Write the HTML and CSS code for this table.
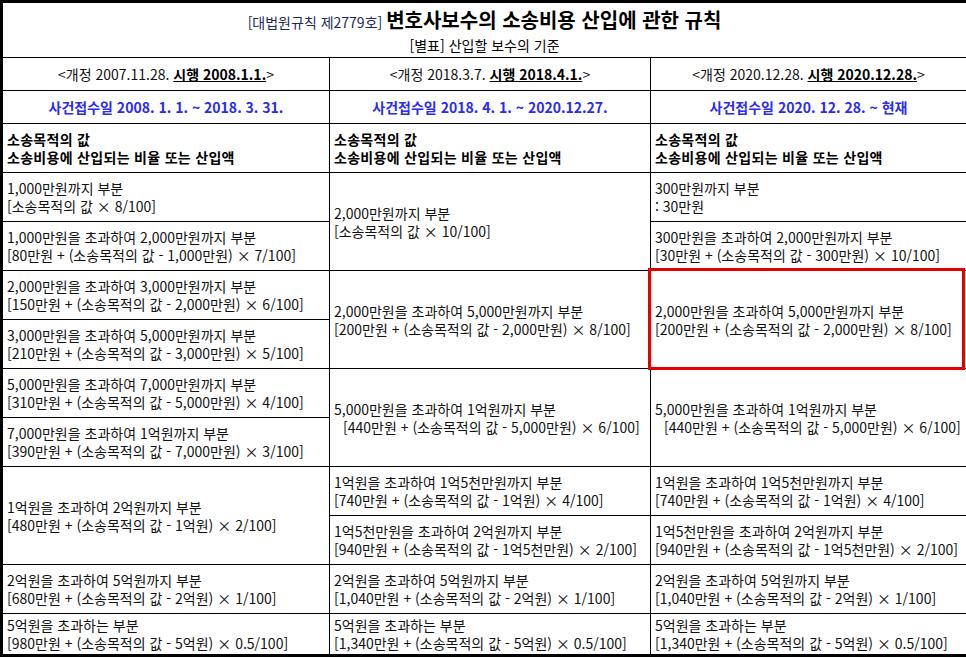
FILE: index.html
```html
<!DOCTYPE html>
<html lang="ko">
<head>
<meta charset="utf-8">
<title>변호사보수의 소송비용 산입에 관한 규칙</title>
<link rel="stylesheet" href="styles.css">
</head>
<body>
<table class="fee-table">
  <colgroup>
    <col class="c1"><col class="c2"><col class="c3">
  </colgroup>
  <tbody>
    <tr class="r-title">
      <td colspan="3" class="title-cell">
        <div class="title-line"><span class="rule-no">[대법원규칙 제2779호]</span> <span class="rule-name">변호사보수의 소송비용 산입에 관한 규칙</span></div>
        <div class="sub-title">[별표] 산입할 보수의 기준</div>
      </td>
    </tr>
    <tr class="r-rev">
      <td class="center">&lt;개정 2007.11.28. <b class="eff">시행 2008.1.1.</b>&gt;</td>
      <td class="center">&lt;개정 2018.3.7. <b class="eff">시행 2018.4.1.</b>&gt;</td>
      <td class="center">&lt;개정 2020.12.28. <b class="eff">시행 2020.12.28.</b>&gt;</td>
    </tr>
    <tr class="r-date">
      <td class="center date">사건접수일 2008. 1. 1. ~ 2018. 3. 31.</td>
      <td class="center date">사건접수일 2018. 4. 1. ~ 2020.12.27.</td>
      <td class="center date">사건접수일 2020. 12. 28. ~ 현재</td>
    </tr>
    <tr class="r-head">
      <td class="head">소송목적의 값<br>소송비용에 산입되는 비율 또는 산입액</td>
      <td class="head">소송목적의 값<br>소송비용에 산입되는 비율 또는 산입액</td>
      <td class="head">소송목적의 값<br>소송비용에 산입되는 비율 또는 산입액</td>
    </tr>
    <tr class="r-sub">
      <td>1,000만원까지 부분<br>[소송목적의 값 × 8/100]</td>
      <td rowspan="2">2,000만원까지 부분<br>[소송목적의 값 × 10/100]</td>
      <td>300만원까지 부분<br>: 30만원</td>
    </tr>
    <tr class="r-sub">
      <td>1,000만원을 초과하여 2,000만원까지 부분<br>[80만원 + (소송목적의 값 - 1,000만원) × 7/100]</td>
      <td>300만원을 초과하여 2,000만원까지 부분<br>[30만원 + (소송목적의 값 - 300만원) × 10/100]</td>
    </tr>
    <tr class="r-sub">
      <td>2,000만원을 초과하여 3,000만원까지 부분<br>[150만원 + (소송목적의 값 - 2,000만원) × 6/100]</td>
      <td rowspan="2">2,000만원을 초과하여 5,000만원까지 부분<br>[200만원 + (소송목적의 값 - 2,000만원) × 8/100]</td>
      <td rowspan="2" class="hl">2,000만원을 초과하여 5,000만원까지 부분<br>[200만원 + (소송목적의 값 - 2,000만원) × 8/100]</td>
    </tr>
    <tr class="r-sub">
      <td>3,000만원을 초과하여 5,000만원까지 부분<br>[210만원 + (소송목적의 값 - 3,000만원) × 5/100]</td>
    </tr>
    <tr class="r-sub">
      <td>5,000만원을 초과하여 7,000만원까지 부분<br>[310만원 + (소송목적의 값 - 5,000만원) × 4/100]</td>
      <td rowspan="2">5,000만원을 초과하여 1억원까지 부분<br><span class="indent">[440만원 + (소송목적의 값 - 5,000만원) × 6/100]</span></td>
      <td rowspan="2">5,000만원을 초과하여 1억원까지 부분<br><span class="indent">[440만원 + (소송목적의 값 - 5,000만원) × 6/100]</span></td>
    </tr>
    <tr class="r-sub">
      <td>7,000만원을 초과하여 1억원까지 부분<br>[390만원 + (소송목적의 값 - 7,000만원) × 3/100]</td>
    </tr>
    <tr class="r-sub">
      <td rowspan="2">1억원을 초과하여 2억원까지 부분<br>[480만원 + (소송목적의 값 - 1억원) × 2/100]</td>
      <td>1억원을 초과하여 1억5천만원까지 부분<br>[740만원 + (소송목적의 값 - 1억원) × 4/100]</td>
      <td>1억원을 초과하여 1억5천만원까지 부분<br>[740만원 + (소송목적의 값 - 1억원) × 4/100]</td>
    </tr>
    <tr class="r-sub">
      <td>1억5천만원을 초과하여 2억원까지 부분<br>[940만원 + (소송목적의 값 - 1억5천만원) × 2/100]</td>
      <td>1억5천만원을 초과하여 2억원까지 부분<br>[940만원 + (소송목적의 값 - 1억5천만원) × 2/100]</td>
    </tr>
    <tr class="r-sub">
      <td>2억원을 초과하여 5억원까지 부분<br>[680만원 + (소송목적의 값 - 2억원) × 1/100]</td>
      <td>2억원을 초과하여 5억원까지 부분<br>[1,040만원 + (소송목적의 값 - 2억원) × 1/100]</td>
      <td>2억원을 초과하여 5억원까지 부분<br>[1,040만원 + (소송목적의 값 - 2억원) × 1/100]</td>
    </tr>
    <tr class="r-last">
      <td>5억원을 초과하는 부분<br>[980만원 + (소송목적의 값 - 5억원) × 0.5/100]</td>
      <td>5억원을 초과하는 부분<br>[1,340만원 + (소송목적의 값 - 5억원) × 0.5/100]</td>
      <td>5억원을 초과하는 부분<br>[1,340만원 + (소송목적의 값 - 5억원) × 0.5/100]</td>
    </tr>
  </tbody>
</table>
</body>
</html>
```
FILE: styles.css
```css
html, body {
  margin: 0;
  padding: 0;
  background: #fff;
}

body {
  font-family: "Noto Sans CJK KR", "Noto Sans", sans-serif;
  font-size: 14px;
  line-height: 18px;
  color: #111;
  overflow: hidden;
}

.fee-table {
  width: 966px;
  table-layout: fixed;
  border-collapse: collapse;
  border: 3px solid #000;
}

.c1 { width: 328px; }
.c2 { width: 321px; }
.c3 { width: 317px; }

.fee-table td {
  border: 1px solid #000;
  padding: 0 4px;
  vertical-align: middle;
  text-align: left;
  white-space: nowrap;
}

.r-title { height: 56px; }
.r-rev { height: 33px; }
.r-date { height: 33px; }
.r-head { height: 49px; }
.r-sub { height: 49px; }
.r-last { height: 42px; }

.fee-table td.title-cell {
  text-align: center;
  padding-top: 1px;
}

.title-line {
  line-height: 26px;
}

.rule-no {
  font-size: 14px;
  color: #1d2b55;
}

.rule-name {
  font-size: 20px;
  font-weight: 700;
  color: #000;
}

.sub-title {
  font-size: 14px;
  line-height: 20px;
  color: #000;
}

.fee-table td.center {
  text-align: center;
}

.eff {
  font-weight: 700;
  text-decoration: underline;
  color: #000;
}

.date {
  font-weight: 700;
  color: #2b2bf2;
}

.head {
  font-weight: 700;
  color: #000;
  letter-spacing: 0.3px;
}

.indent {
  padding-left: 9px;
}

.fee-table td.hl {
  position: relative;
}

.fee-table td.hl::after {
  content: "";
  position: absolute;
  left: -3px;
  top: -3px;
  right: 1px;
  bottom: -2px;
  border: 3px solid #e60000;
  pointer-events: none;
}
```
